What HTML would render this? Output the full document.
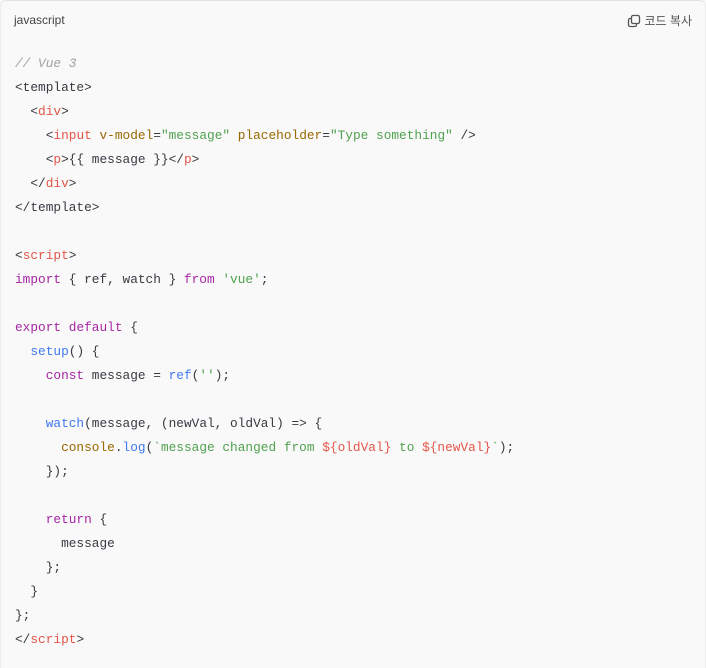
<!DOCTYPE html>
<html><head><meta charset="utf-8"><style>
html,body{margin:0;padding:0;background:#f9f9f9;width:706px;height:668px;overflow:hidden}
.box{position:absolute;left:0;top:0;width:704px;height:667px;border-top:1px solid #e3e3e3;border-left:1px solid #ececec;border-right:1px solid #ececec;border-radius:6px 6px 0 0;background:#f9f9f9}
.hd{position:absolute;left:13px;top:12px;font:12px "Liberation Sans",sans-serif;color:#444}
.cp{position:absolute;right:13px;top:11px;font:12px "Liberation Sans","Noto Sans CJK KR",sans-serif;color:#555;display:flex;align-items:center;gap:4px}
pre{position:absolute;left:14px;top:51px;margin:0;font:12.8px/24px "Liberation Mono",monospace;color:#383a42}
.c{color:#a0a1a7;font-style:italic}.t{color:#e45649}.a{color:#986801}.s{color:#50a14f}.k{color:#a626a4}.f{color:#4078f2}
</style></head><body><div class="box">
<div class="hd">javascript</div>
<div class="cp"><svg width="14" height="14" viewBox="0 0 14 14" fill="none" stroke="#555" stroke-width="1.3"><rect x="4.5" y="1.5" width="8" height="8" rx="1.5"/><path d="M9.5 9.5v1.5a1.5 1.5 0 0 1-1.5 1.5H3A1.5 1.5 0 0 1 1.5 11V6A1.5 1.5 0 0 1 3 4.5h1.5"/></svg>코드 복사</div>
<pre><span class="c">// Vue 3</span>
&lt;template&gt;
  &lt;<span class="t">div</span>&gt;
    &lt;<span class="t">input</span> <span class="a">v-model</span>=<span class="s">"message"</span> <span class="a">placeholder</span>=<span class="s">"Type something"</span> /&gt;
    &lt;<span class="t">p</span>&gt;{{ message }}&lt;/<span class="t">p</span>&gt;
  &lt;/<span class="t">div</span>&gt;
&lt;/template&gt;

&lt;<span class="t">script</span>&gt;
<span class="k">import</span> { ref, watch } <span class="k">from</span> <span class="s">'vue'</span>;

<span class="k">export</span> <span class="k">default</span> {
  <span class="f">setup</span>() {
    <span class="k">const</span> message = <span class="f">ref</span>(<span class="s">''</span>);

    <span class="f">watch</span>(message, (newVal, oldVal) =&gt; {
      <span class="a">console</span>.<span class="f">log</span>(<span class="s">`message changed from </span><span class="t">${oldVal}</span><span class="s"> to </span><span class="t">${newVal}</span><span class="s">`</span>);
    });

    <span class="k">return</span> {
      message
    };
  }
};
&lt;/<span class="t">script</span>&gt;</pre>
</div></body></html>
